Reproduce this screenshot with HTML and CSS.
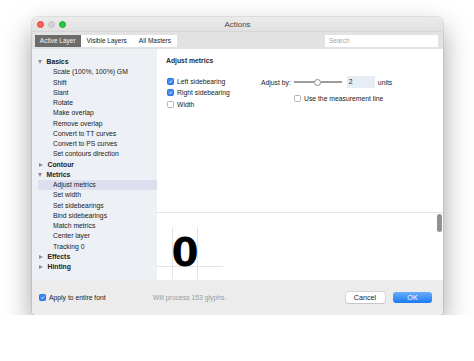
FILE: index.html
```html
<!DOCTYPE html>
<html lang="en">
  <head>
    <meta charset="UTF-8" />
    <meta name="viewport" content="width=device-width, initial-scale=1.0" />
    <title>Actions</title>
    <link rel="stylesheet" href="styles.css">
  </head>
  <body>
    <div class="window">
      <header class="titlebar">
        <div class="lights">
          <span class="light red"></span>
          <span class="light off"></span>
          <span class="light green"></span>
        </div>
        <div class="title">Actions</div>
      </header>
      <div class="toolbar">
        <div class="tabs">
          <span class="tab active">Active Layer</span>
          <span class="tab">Visible Layers</span>
          <span class="tab">All Masters</span>
        </div>
        <div class="search">Search</div>
      </div>
      <main class="main">
        <aside class="sidebar">
          <ul class="tree">
            <li class="group open">
              <div class="head"><i class="arrow"></i>Basics</div>
              <ul class="children">
                <li>Scale (100%, 100%) GM</li>
                <li>Shift</li>
                <li>Slant</li>
                <li>Rotate</li>
                <li>Make overlap</li>
                <li>Remove overlap</li>
                <li>Convert to TT curves</li>
                <li>Convert to PS curves</li>
                <li>Set contours direction</li>
              </ul>
            </li>
            <li class="group">
              <div class="head"><i class="arrow"></i>Contour</div>
            </li>
            <li class="group open">
              <div class="head"><i class="arrow"></i>Metrics</div>
              <ul class="children">
                <li class="selected">Adjust metrics</li>
                <li>Set width</li>
                <li>Set sidebearings</li>
                <li>Bind sidebearings</li>
                <li>Match metrics</li>
                <li>Center layer</li>
                <li>Tracking 0</li>
              </ul>
            </li>
            <li class="group">
              <div class="head"><i class="arrow"></i>Effects</div>
            </li>
            <li class="group">
              <div class="head"><i class="arrow"></i>Hinting</div>
            </li>
          </ul>
        </aside>
        <section class="panel">
          <div class="options">
            <h2 class="options-title">Adjust metrics</h2>
            <div class="options-body">
              <div class="checks">
                <label class="check"><span class="box on"><svg viewBox="0 0 8 8"><path d="M1.8 4.2 L3.4 5.8 L6.3 2.3" /></svg></span>Left sidebearing</label>
                <label class="check"><span class="box on"><svg viewBox="0 0 8 8"><path d="M1.8 4.2 L3.4 5.8 L6.3 2.3" /></svg></span>Right sidebearing</label>
                <label class="check"><span class="box"></span>Width</label>
              </div>
              <div class="adjust">
                <div class="adjust-row">
                  <span>Adjust by:</span>
                  <div class="slider"><i class="track"></i><i class="knob"></i><i class="track"></i></div>
                  <span class="field">2</span>
                  <span class="units">units</span>
                </div>
                <label class="check measure"><span class="box"></span>Use the measurement line</label>
              </div>
            </div>
          </div>
          <div class="preview">
            <svg class="canvas" width="285" height="66" viewBox="0 0 285 66">
              <line x1="15.5" y1="14" x2="15.5" y2="66" />
              <line x1="40.5" y1="14" x2="40.5" y2="66" />
              <line x1="0" y1="53.5" x2="66" y2="53.5" />
              <text x="28" y="52.5">0</text>
            </svg>
            <div class="scroll-thumb"></div>
          </div>
        </section>
      </main>
      <footer class="footer">
        <label class="check apply"><span class="box on"><svg viewBox="0 0 8 8"><path d="M1.8 4.2 L3.4 5.8 L6.3 2.3" /></svg></span>Apply to entire font</label>
        <span class="status">Will process 153 glyphs.</span>
        <button class="btn cancel">Cancel</button>
        <button class="btn ok">OK</button>
      </footer>
    </div>
  </body>
</html>
```

FILE: styles.css
```css
* {
  box-sizing: border-box;
}
ul {
  list-style: none;
  margin: 0;
  padding: 0;
}
body {
  margin: 0;
  background: #ffffff;
  font-family: "Liberation Sans", Arial, sans-serif;
  color: #222;
}

.window {
  margin: 17px 0 0 32px;
  width: 411px;
  height: 298px;
  display: flex;
  flex-direction: column;
  background: #ececec;
  border-radius: 5px 5px 3px 3px;
  box-shadow: 0 12px 28px rgba(0, 0, 0, 0.38), 0 0 0 0.5px rgba(0, 0, 0, 0.15);
  overflow: hidden;
}

/* title bar */
.titlebar {
  height: 14px;
  flex-shrink: 0;
  display: grid;
  grid-template-columns: 1fr auto 1fr;
  align-items: center;
  background: linear-gradient(#ebebeb, #e1e1e1);
}
.lights {
  display: flex;
  gap: 4px;
  padding-left: 4.5px;
}
.light {
  width: 7px;
  height: 7px;
  border-radius: 50%;
}
.light.red {
  background: #fc5f57;
  border: 0.5px solid #e0443e;
}
.light.off {
  background: #d3d3d3;
  border: 0.5px solid #c4c4c4;
}
.light.green {
  background: #29c940;
  border: 0.5px solid #1aab29;
}
.title {
  font-size: 8px;
  color: #4a4a4a;
}

/* toolbar */
.toolbar {
  height: 18px;
  flex-shrink: 0;
  padding: 3px 5px 3px 3px;
  display: flex;
  justify-content: space-between;
  background: #e2e2e2;
  border-top: 0.5px solid #d6d6d6;
}
.tabs {
  display: flex;
  height: 12px;
  background: #ffffff;
}
.tab {
  font-size: 6.5px;
  line-height: 12px;
  padding: 0 5.5px;
  color: #222;
}
.tab.active {
  background: #6c6c6c;
  color: #f4f4f4;
  width: 45.5px;
  text-align: center;
  padding: 0;
}
.tab + .tab {
  padding: 0 6px;
}
.search {
  width: 113px;
  height: 12px;
  background: #ffffff;
  font-size: 6.5px;
  line-height: 12px;
  padding-left: 4px;
  color: #a6a6a6;
}

/* main */
.main {
  height: 231px;
  flex-shrink: 0;
  display: flex;
}
.sidebar {
  width: 125px;
  background: #edf0f4;
  padding-top: 8px;
  font-size: 6.8px;
}
.tree li,
.tree .head {
  height: 10.25px;
  line-height: 10.25px;
  white-space: nowrap;
}
.tree .group {
  height: auto;
}
.tree .head {
  display: flex;
  align-items: center;
  padding-left: 6px;
  font-weight: bold;
}
.tree .arrow {
  width: 0;
  height: 0;
  margin-right: 4.5px;
  border-top: 2.5px solid transparent;
  border-bottom: 2.5px solid transparent;
  border-left: 4px solid #8d8d8d;
  margin-left: 1px;
}
.tree .open > .head > .arrow {
  border-left: 2.5px solid transparent;
  border-right: 2.5px solid transparent;
  border-top: 4px solid #8d8d8d;
  border-bottom: 0;
  margin-left: 0;
}
.tree .children li {
  padding-left: 21px;
}
.tree .children li.selected {
  margin-left: 6px;
  padding-left: 15px;
  background: #dcdfee;
}

/* right panel */
.panel {
  flex: 1;
  display: flex;
  flex-direction: column;
  background: #ffffff;
}
.options {
  height: 164px;
  flex-shrink: 0;
  padding: 7px 9px 6px;
  border-bottom: 1px solid #e6e6e6;
  font-size: 6.8px;
}
.options-title {
  margin: 0;
  font-size: 6.8px;
  line-height: 10px;
  font-weight: bold;
  color: #2a2a2a;
}
.options-body {
  display: flex;
  margin-top: 9.5px;
}
.checks {
  width: 95px;
  display: flex;
  flex-direction: column;
}
.check {
  display: flex;
  align-items: center;
  height: 11.5px;
  white-space: nowrap;
}
.box {
  width: 7px;
  height: 7px;
  margin: 0 3px 0 1px;
  border: 0.6px solid #b4b4b4;
  border-radius: 1.5px;
  background: #ffffff;
  display: flex;
}
.box.on {
  background: #3b86f7;
  border-color: #2f74e0;
}
.box svg {
  width: 100%;
  height: 100%;
  fill: none;
  stroke: #ffffff;
  stroke-width: 1.3;
}
.adjust-row {
  display: flex;
  align-items: center;
  height: 12px;
  margin-top: 0.5px;
}
.slider {
  width: 48px;
  margin-left: 3px;
  display: flex;
  align-items: center;
}
.slider .track {
  flex: 1;
  height: 1.2px;
  background: #9c9c9c;
}
.slider .knob {
  width: 7px;
  height: 7px;
  border-radius: 50%;
  background: #ffffff;
  border: 0.6px solid #8a8a8a;
}
.field {
  width: 28px;
  height: 12px;
  margin-left: 5px;
  padding-left: 2px;
  line-height: 12px;
  background: #e7edf5;
}
.units {
  margin-left: 3px;
}
.measure {
  margin: 5px 0 0 32px;
}

/* preview */
.preview {
  flex: 1;
  min-height: 0;
  position: relative;
  overflow: hidden;
}
.canvas {
  display: block;
}
.canvas line {
  stroke: #e4e4e4;
  stroke-width: 1;
}
.canvas text {
  font-family: "DejaVu Sans", sans-serif;
  font-weight: bold;
  font-size: 39px;
  text-anchor: middle;
  fill: #000;
}
.scroll-thumb {
  position: absolute;
  right: 1px;
  top: 1px;
  width: 5px;
  height: 18px;
  border-radius: 3px;
  background: #929292;
}

/* footer */
.footer {
  height: 35px;
  flex-shrink: 0;
  display: flex;
  align-items: center;
  padding: 0 11px 0 6px;
  font-size: 6.8px;
}
.apply {
  width: 115px;
}
.status {
  color: #9a9a9a;
}
.btn {
  width: 39px;
  height: 11.5px;
  padding: 0;
  border: none;
  border-radius: 3px;
  font-family: "Liberation Sans", Arial, sans-serif;
  font-size: 7.2px;
}
.cancel {
  margin-left: auto;
  background: #ffffff;
  color: #222;
  box-shadow: 0 0 0 0.5px #c2c2c2, 0 0.5px 1px rgba(0, 0, 0, 0.15);
}
.ok {
  margin-left: 8.5px;
  background: linear-gradient(#6aaefb, #1b7bf3);
  color: #ffffff;
}
```
